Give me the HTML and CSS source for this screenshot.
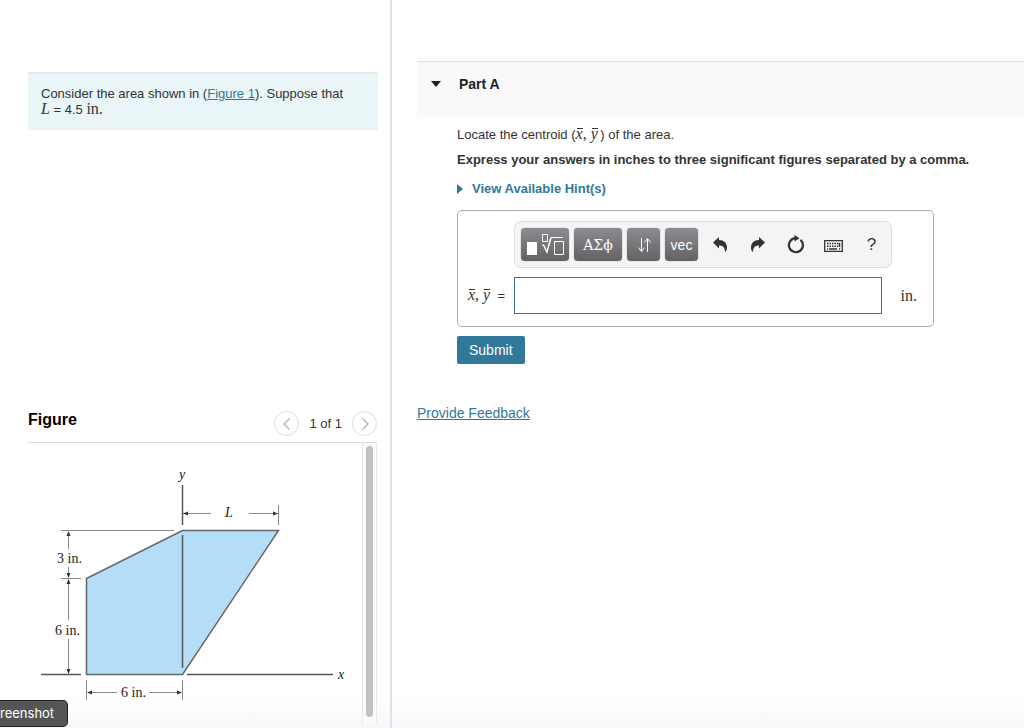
FILE: index.html
```html
<!DOCTYPE html>
<html lang="en">
  <head>
    <meta charset="UTF-8" />
    <meta name="viewport" content="width=device-width, initial-scale=1.0" />
    <title>Part A</title>
    <link rel="stylesheet" href="styles.css">
  </head>
  <body>
    <div class="page">
      <aside class="sidebar">
        <div class="prompt">
          Consider the area shown in (<a href="#figure">Figure 1</a>). Suppose that<br />
          <span class="math"><i>L</i></span> = 4.5 <span class="math">in.</span>
        </div>

        <section class="figure" id="figure">
          <header class="figure-header">
            <h2>Figure</h2>
            <nav class="pager">
              <button type="button" aria-label="Previous figure">
                <svg width="10" height="12" viewBox="0 0 10 12"><path d="M7.500 0.500 2 6 7.500 11.500" /></svg>
              </button>
              <span>1 of 1</span>
              <button type="button" aria-label="Next figure">
                <svg width="10" height="12" viewBox="0 0 10 12"><path d="M2.500 0.500 8 6 2.500 11.500" /></svg>
              </button>
            </nav>
          </header>
          <div class="figure-body">
            <svg class="diagram" width="334" height="280" viewBox="28 443 334 280">
              <path class="shape" d="M86.500 578.500 182.500 530.500H278.500L182.500 674.500H86.500Z" />
              <!-- axes -->
              <path class="axis" d="M182.500 485V525M182.500 535V668M41 674.500H81M187 674.500H333" />
              <!-- dimension lines -->
              <path class="dim" d="M61 530.500H174M61 578.500H81M68.500 532V549M68.500 567V577M68.500 580V620M68.500 639V673M183 513.500h28M249 513.500H278M278.500 505V525M86.500 680V700M182.500 680V700M88 692.500H117M149 692.500H181" />
              <path class="arrow" d="M68.500 531l-2 5h4zM68.500 578l-2-5h4zM68.500 579l-2 5h4zM68.500 674l-2-5h4zM183 513.500l5-2v4zM278 513.500l-5-2v4zM87 692.500l5-2v4zM182 692.500l-5-2v4z" />
              <text class="it" x="179" y="479">y</text>
              <text class="it" x="225" y="517">L</text>
              <text class="it" x="338" y="679">x</text>
              <text x="57" y="563">3 in.</text>
              <text x="55" y="635">6 in.</text>
              <text x="121" y="697">6 in.</text>
            </svg>
            <div class="scrollbar"><div class="thumb"></div></div>
          </div>
        </section>
      </aside>

      <main class="main">
        <header class="part-header">
          <svg width="10" height="6" viewBox="0 0 10 6"><path d="M0 0h10L5 6z" /></svg>
          <h2>Part A</h2>
        </header>

        <div class="part-body">
          <p>Locate the centroid (<span class="math"><i class="bar">x</i>, <i class="bar">y</i></span>&thinsp;) of the area.</p>
          <p class="instructions">Express your answers in inches to three significant figures separated by a comma.</p>
          <a class="hints" href="#hints">
            <svg width="6" height="10" viewBox="0 0 6 10"><path d="M0 0v10l6-5z" /></svg>
            View Available Hint(s)
          </a>

          <form class="answer" id="answerForm">
            <div class="toolbar">
              <button type="button" class="key wide" aria-label="Templates">
                <svg width="38" height="24" viewBox="0 0 38 24">
                  <path fill="#fff" d="M1 9h10v13H1z" />
                  <path fill="none" stroke="#fff" d="M16.500 1.500h5v7h-5zM28.500 8.500h9v13h-9zM16 12.500l2-1M25 4.500h12" />
                  <path fill="none" stroke="#fff" stroke-width="1.500" d="M17.500 12l3.500 7 4-14.500" />
                </svg>
              </button>
              <button type="button" class="key wide greek">ΑΣϕ</button>
              <button type="button" class="key" aria-label="Sub and superscript">
                <svg width="14" height="16" viewBox="0 0 14 16"><path fill="none" stroke="#fff" d="M4.500 1v13M1.500 10.500l3 4 3-4M10.500 15V2M7.500 5.500l3-4 3 4" /></svg>
              </button>
              <button type="button" class="key">vec</button>
              <button type="button" class="tool" aria-label="Undo">
                <svg width="14" height="15" viewBox="0 0 14 15"><path d="M0 5.500 6 0v3c5 0 8 3 8 7.500 0 2-.5 3.500-2 4.500C12 10.500 10 8.500 6 8.500v3z" /></svg>
              </button>
              <button type="button" class="tool" aria-label="Redo">
                <svg width="14" height="15" viewBox="0 0 14 15"><path d="M14 5.500 8 0v3c-5 0-8 3-8 7.500 0 2 .5 3.500 2 4.500C2 10.500 4 8.500 8 8.500v3z" /></svg>
              </button>
              <button type="button" class="tool" aria-label="Reset">
                <svg width="18" height="19" viewBox="0 0 18 19"><path fill="none" stroke="#333" stroke-width="2.200" d="M13.500 4.900a7 7 0 1 1-5-1.700" /><path d="M7.500 0v6.500l5-3.200z" /></svg>
              </button>
              <button type="button" class="tool keyboard" aria-label="Keyboard shortcuts">
                <svg width="19" height="12" viewBox="0 0 19 12"><path fill="none" stroke="#333" stroke-width="1.300" d="M.7.700h17.600v10.600H.7z" /><path fill="none" stroke="#333" stroke-width="1.500" d="M5 9h8M15.500 3v4" /><path fill="none" stroke="#333" stroke-width="1.500" stroke-dasharray="1.500 1" d="M3 3.500h12M3 6.200h11M3 9h1M15 9h1" /></svg>
              </button>
              <button type="button" class="tool help" aria-label="Help">?</button>
            </div>
            <label for="answer"><span class="math"><i class="bar">x</i>, <i class="bar">y</i></span>&nbsp; =</label>
            <input type="text" id="answer" autocomplete="off" />
            <span class="unit math">in.</span>
          </form>

          <button type="submit" form="answerForm" class="submit">Submit</button>
        </div>

        <a class="feedback" href="#feedback">Provide Feedback</a>
      </main>
    </div>
    <div class="tooltip">reenshot</div>
  </body>
</html>
```
FILE: styles.css
```css
* {
  box-sizing: border-box;
}
body {
  margin: 0;
  font-family: "Liberation Sans", Arial, sans-serif;
  font-size: 13px;
  line-height: 16px;
  color: #333;
}
h2,
p {
  margin: 0;
}
a {
  color: #31789b;
}
button {
  font-family: inherit;
  padding: 0;
  border: none;
  cursor: pointer;
}
.page {
  display: grid;
  grid-template-columns: 392px 1fr;
  min-height: 100vh;
  background: linear-gradient(to top, #f7f7f9, #fff 30px);
}
.math {
  font-family: "Liberation Serif", "Times New Roman", serif;
  font-size: 16px;
  line-height: 14px;
}
.bar {
  background: linear-gradient(#333, #333) 1px 3px / 6px 1px no-repeat;
}

/* left column */
.sidebar {
  display: flex;
  flex-direction: column;
  justify-content: space-between;
  padding: 72px 12px 5px 28px;
  border-right: 2px solid #d9e3ec;
}
.prompt {
  padding: 12px 12px 12px 13px;
  border-top: 2px solid #e3ebec;
  background: #e9f5f7;
}
.figure-header {
  display: flex;
  justify-content: space-between;
  height: 38px;
  margin-right: 1px;
  border-bottom: 1px solid #ddd;
}
.figure-header h2 {
  padding-top: 7px;
  font-size: 16px;
  color: #000;
}
.pager {
  display: flex;
  align-items: center;
  gap: 10px;
  height: 37px;
}
.pager button {
  display: grid;
  place-items: center;
  width: 25px;
  height: 25px;
  border: 1px solid #ddd;
  border-radius: 50%;
  background: #fff;
}
.pager path {
  fill: none;
  stroke: #bbb;
  stroke-width: 1.5;
}
.figure-body {
  display: flex;
  justify-content: space-between;
}
.scrollbar {
  width: 15px;
  margin-right: 1px;
  padding: 3px 3px 6px;
  border: 1px solid #e8e8e8;
  border-width: 0 1px;
  background: #fafafa;
}
.thumb {
  height: 100%;
  border-radius: 4px;
  background: #c1c1c1;
}
.diagram text {
  font-family: "Liberation Serif", "Times New Roman", serif;
  font-size: 14px;
  fill: #222;
}
.diagram .it {
  font-style: italic;
}
.shape {
  fill: #b4def7;
  stroke: #666;
  stroke-width: 1.5;
}
.axis {
  fill: none;
  stroke: #555;
  stroke-width: 1.5;
}
.dim {
  fill: none;
  stroke: #888;
}
.arrow {
  fill: #333;
}

/* right column */
.main {
  padding: 61px 0 0 25px;
}
.part-header {
  display: flex;
  gap: 18px;
  height: 56px;
  padding: 14px;
  border-top: 1px solid #ddd;
  background: #f9f9f9;
}
.part-header svg {
  margin-top: 5px;
  fill: #222;
}
.part-header h2 {
  font-size: 14px;
  color: #222;
}
.part-body {
  padding: 10px 40px 0;
}
.instructions {
  margin-top: 9px;
  font-weight: bold;
}
.hints {
  display: flex;
  align-items: center;
  gap: 9px;
  margin-top: 13px;
  font-weight: bold;
  text-decoration: none;
}
.hints svg {
  fill: #31789b;
}
.answer {
  display: grid;
  grid-template-columns: 46px 1fr 44px;
  align-items: center;
  row-gap: 9px;
  max-width: 477px;
  margin-top: 13px;
  padding: 10px 7px 12px 10px;
  border: 1px solid #aaa;
  border-radius: 5px;
}
.toolbar {
  grid-column: 2 / 4;
  display: flex;
  align-items: center;
  gap: 5px;
  height: 47px;
  margin-right: 34px;
  padding: 0 0 0 6px;
  border: 1px solid #ddd;
  border-radius: 7px;
  background: #f4f4f4;
}
.key {
  display: grid;
  place-items: center;
  width: 33px;
  height: 33px;
  border-radius: 4px;
  background: linear-gradient(#8c8b92, #626262);
  box-shadow: 0 0 1px #555;
  color: #fff;
  font-size: 14px;
}
.wide {
  width: 48px;
}
.greek {
  font-family: "DejaVu Serif", serif;
}
.tool {
  display: grid;
  place-items: center;
  width: 33px;
  height: 33px;
  background: none;
  color: #333;
  fill: #333;
}
.keyboard {
  padding-top: 3px;
}
.help {
  font-size: 17px;
}
#answer {
  width: 100%;
  height: 37px;
  padding: 0 8px;
  border: 1px solid #31789b;
  background: #fff;
  font-size: 16px;
}
.unit {
  padding-right: 9px;
  text-align: right;
}
.submit {
  height: 28px;
  margin-top: 9px;
  padding: 0 12px;
  border-radius: 2px;
  background: #31789b;
  color: #fff;
  font-size: 14px;
}
.feedback {
  display: inline-block;
  margin-top: 41px;
  font-size: 14px;
}

.tooltip {
  position: fixed;
  left: 0;
  bottom: 1px;
  height: 27px;
  padding: 0 13px 0 0;
  border: 1px solid #222;
  border-left: none;
  border-radius: 0 5px 5px 0;
  background: #555;
  color: #fff;
  font-family: Inter, sans-serif;
  font-size: 13px;
  line-height: 25px;
}
```
